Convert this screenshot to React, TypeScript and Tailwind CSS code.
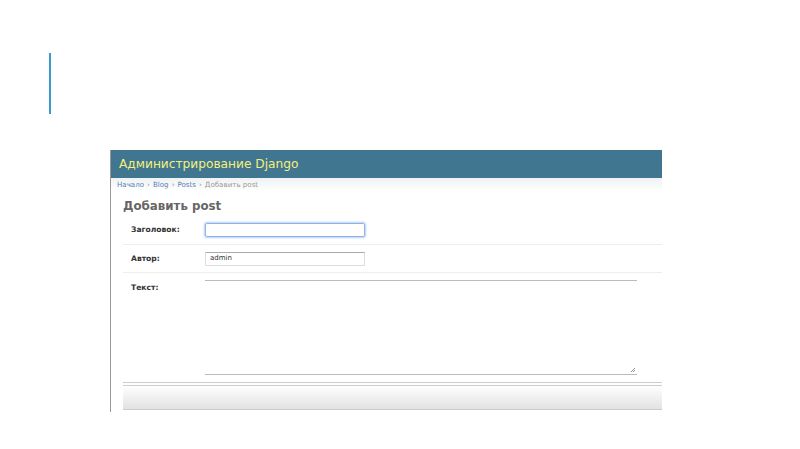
export default function App() {
  return (
    <div className="w-[800px] h-[449px] bg-white overflow-hidden flex flex-col" style={{ fontFamily: '"DejaVu Sans", Verdana, sans-serif' }}>
      <div className="pt-[53px] pl-[49px]">
        <div className="w-[2px] h-[61px] bg-[#3a9ccc]" />
      </div>
      <div className="ml-[110px] mt-[36px] w-[552px] h-[262px] border-l border-[#999] flex flex-col">
        <div className="h-[28px] bg-[#417690] flex items-center pl-[8px] text-[#f3f07c] text-[12.2px] leading-none">
          Администрирование Django
        </div>
        <div className="h-[13px] bg-gradient-to-b from-[#eef2f3] to-white flex items-center pl-[6px] text-[7.1px] text-[#999] leading-none">
          <span className="text-[#5b80b2]">Начало</span>
          <span className="mx-[3px]">›</span>
          <span className="text-[#5b80b2]">Blog</span>
          <span className="mx-[3px]">›</span>
          <span className="text-[#5b80b2]">Posts</span>
          <span className="mx-[3px]">›</span>
          <span>Добавить post</span>
        </div>
        <div className="pl-[12px] flex flex-col flex-1">
          <div className="h-[25px] flex items-end text-[11.8px] font-bold text-[#666] leading-none pb-[3px]">Добавить post</div>
          <div className="h-[29px] flex items-center border-b border-[#eee]">
            <div className="w-[82px] pl-[8px] text-[7.6px] text-[#333] font-bold">Заголовок:</div>
            <div className="w-[160px] h-[14px] border border-[#8fb3e8] rounded-[2px] shadow-[0_0_2px_1px_#b6d0f5]" />
          </div>
          <div className="h-[28px] flex items-center border-b border-[#eee]">
            <div className="w-[82px] pl-[8px] text-[7.6px] text-[#333] font-bold">Автор:</div>
            <div className="w-[160px] h-[14px] border border-[#ddd] border-t-[#aaa] flex items-center pl-[4px] text-[7px] text-[#333]">admin</div>
          </div>
          <div className="h-[109px] flex items-start pt-[7px]">
            <div className="w-[82px] pl-[8px] text-[7.6px] text-[#333] font-bold pt-[2px]">Текст:</div>
            <div className="relative w-[432px] h-[95px] border-t border-b border-[#bbb]">
              <svg className="absolute right-[1px] bottom-[1px]" width="6" height="6" viewBox="0 0 6 6">
                <path d="M5 1L1 5M5 3L3 5" stroke="#777" strokeWidth="0.8" />
              </svg>
            </div>
          </div>
          <div className="h-[4px] border-t border-b border-[#ccc]" />
          <div className="h-[24px] bg-gradient-to-b from-white to-[#e2e2e2] border-b border-[#ccc]" />
        </div>
      </div>
    </div>
  );
}
